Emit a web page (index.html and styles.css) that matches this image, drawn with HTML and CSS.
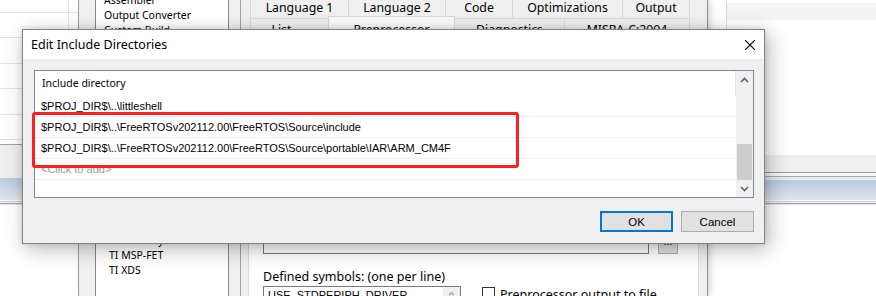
FILE: index.html
```html
<!DOCTYPE html>
<html lang="en">
<head>
    <meta charset="UTF-8">
    <meta name="viewport" content="width=device-width, initial-scale=1.0">
    <title>Edit Include Directories</title>
    <link rel="stylesheet" href="styles.css">
</head>
<body>
    <div class="desktop">
        <!-- IDE behind the options window -->
        <div class="host">
            <div class="host-left">
                <div class="sheet"></div>
                <div class="strip-grey"></div>
                <div class="strip-blue"></div>
                <div class="strip-edge"></div>
            </div>
            <div class="host-right">
                <div class="editor">
                    <div class="editor-bar"></div>
                </div>
                <div class="strip-grey short"></div>
                <div class="strip-rule"></div>
                <div class="strip-blue short"></div>
                <div class="strip-edge"></div>
            </div>
        </div>

        <!-- Options window -->
        <div class="options">
            <ul class="category-list">
                <li>Assembler</li>
                <li>Output Converter</li>
                <li>Custom Build</li>
                <li>Build Actions</li>
                <li>Linker</li>
                <li>Debugger</li>
                <li class="sub">Simulator</li>
                <li class="sub">CADI</li>
                <li class="sub">CMSIS DAP</li>
                <li class="sub">GDB Server</li>
                <li class="sub">I-jet</li>
                <li class="sub">J-Link/J-Trace</li>
                <li class="sub">TI Stellaris</li>
                <li class="sub">Nu-Link</li>
                <li class="sub">PE micro</li>
                <li class="sub">ST-LINK</li>
                <li class="sub">Third-Party Driver</li>
                <li class="sub">TI MSP-FET</li>
                <li class="sub">TI XDS</li>
            </ul>
            <div class="splitter"></div>
            <div class="tab-control">
                <div class="tab-row upper">
                    <div class="tab w-lang1">Language 1</div>
                    <div class="tab w-lang2">Language 2</div>
                    <div class="tab w-code">Code</div>
                    <div class="tab w-opt">Optimizations</div>
                    <div class="tab w-out">Output</div>
                </div>
                <div class="tab-row lower">
                    <div class="tab w-list">List</div>
                    <div class="tab w-pre selected">Preprocessor</div>
                    <div class="tab w-diag">Diagnostics</div>
                    <div class="tab w-misra">MISRA-C:2004</div>
                </div>
                <div class="tab-panel">
                    <div class="file-row">
                        <div class="textbox"></div>
                        <div class="browse">...</div>
                    </div>
                    <div class="field-label">Defined symbols: (one per line)</div>
                    <div class="symbols-row">
                        <div class="symbols-box">
                            <div class="symbols-text">USE_STDPERIPH_DRIVER</div>
                            <div class="mini-scroll">
                                <svg width="17" height="14" viewBox="0 0 17 14"><path d="M6 8 L8.5 5.5 L11 8" fill="none" stroke="#a0a0a0" stroke-width="1.2"/></svg>
                            </div>
                        </div>
                        <div class="check"><span class="check-box"></span>Preprocessor output to file</div>
                    </div>
                </div>
            </div>
        </div>

        <!-- Edit Include Directories dialog -->
        <div class="dialog">
            <div class="dialog-title">
                <span>Edit Include Directories</span>
                <svg class="close" width="10" height="10" viewBox="0 0 10 10">
                    <path d="M0 0 L10 10 M10 0 L0 10" stroke="#000" stroke-width="1.1"/>
                </svg>
            </div>
            <div class="dialog-body">
                <div class="dir-list">
                    <div class="dir-rows">
                        <div class="dir-header">Include directory</div>
                        <div class="dir-row">$PROJ_DIR$\..\littleshell</div>
                        <div class="dir-row">$PROJ_DIR$\..\FreeRTOSv202112.00\FreeRTOS\Source\include</div>
                        <div class="dir-row">$PROJ_DIR$\..\FreeRTOSv202112.00\FreeRTOS\Source\portable\IAR\ARM_CM4F</div>
                        <div class="dir-row add">&lt;Click to add&gt;</div>
                        <div class="dir-row last"></div>
                    </div>
                    <div class="scrollbar">
                        <svg width="17" height="17" viewBox="0 0 17 17"><path d="M5 11 L8.5 7.5 L12 11" fill="none" stroke="#606060" stroke-width="1.6"/></svg>
                        <div class="track"><div class="thumb"></div></div>
                        <svg width="17" height="17" viewBox="0 0 17 17"><path d="M5 7 L8.5 10.5 L12 7" fill="none" stroke="#606060" stroke-width="1.6"/></svg>
                    </div>
                    <div class="highlight"></div>
                </div>
                <div class="dialog-buttons">
                    <button class="btn default">OK</button>
                    <button class="btn">Cancel</button>
                </div>
            </div>
        </div>
    </div>
</body>
</html>
```

FILE: styles.css
```css
body {
    margin: 0;
    background: #fff;
    font-family: "Noto Sans", "Liberation Sans", sans-serif;
    color: #000;
}

.desktop {
    position: relative;
    width: 876px;
    height: 296px;
    overflow: hidden;
}

/* Host IDE */
.host {
    display: flex;
    justify-content: space-between;
    height: 296px;
}

.host-left {
    width: 78px;
    display: flex;
    flex-direction: column;
}

.sheet {
    height: 145px;
    box-sizing: border-box;
    border-bottom: 1px solid #a0a0a0;
    background:
        linear-gradient(to right, transparent 68px, #e3e3e3 68px, #e3e3e3 69px, transparent 69px),
        repeating-linear-gradient(to bottom, transparent 0, transparent 12px, #e3e3e3 12px, #e3e3e3 13px, transparent 13px, transparent 25.4px);
}

.strip-grey {
    height: 33px;
    background: #f0f0f0;
}

.strip-grey.short {
    height: 17px;
}

.strip-blue {
    height: 22px;
    background: linear-gradient(#bccadb, #dde6f0);
}

.strip-blue.short {
    height: 20px;
}

.strip-edge {
    height: 5px;
    background: linear-gradient(#f6f8fa 0, #f6f8fa 1px, #cfcfcf 1px, #cfcfcf 2px, #f0f0f0 2px, #f0f0f0 3px, #a6a6a6 3px, #a6a6a6 4px, #e2e2e2 4px);
}

.strip-rule {
    height: 8px;
    background: linear-gradient(#9a9a9a 0, #9a9a9a 1px, #f7f7f7 1px, #f7f7f7 4px, #a8a8a8 4px, #a8a8a8 5px, #e6ecf3 5px);
}

.host-right {
    width: 167px;
    display: flex;
    flex-direction: column;
}

.editor {
    height: 155px;
    box-sizing: border-box;
    margin-left: 17px;
    padding-top: 3px;
    border-left: 1px solid #dadada;
}

.editor-bar {
    height: 17px;
    background: #f4f4f4;
}

/* Options window */
.options {
    position: absolute;
    z-index: 1;
    left: 78px;
    top: 0;
    width: 630px;
    height: 296px;
    box-sizing: border-box;
    display: flex;
    align-items: flex-start;
    background: #f0f0f0;
    border-left: 1px solid #9c9c9c;
    border-right: 1px solid #8f8f8f;
    box-shadow: 3px 0 6px rgba(0, 0, 0, 0.15);
}

.category-list {
    list-style: none;
    margin: -10px 0 0 16px;
    padding: 2px 0 0 8px;
    width: 134px;
    height: 330px;
    box-sizing: border-box;
    background: #fff;
    border: 1px solid #828790;
    font-size: 10.5px;
    line-height: 15px;
    white-space: nowrap;
    overflow: hidden;
}

.category-list .sub {
    padding-left: 5px;
}

.splitter {
    width: 1px;
    align-self: stretch;
    margin-left: 11px;
    background: #a0a0a0;
}

.tab-control {
    width: 451px;
    margin-left: 7px;
    align-self: stretch;
    display: flex;
    flex-direction: column;
}

.tab-row {
    display: flex;
    padding-left: 2px;
}

.tab-row.upper {
    margin-top: -3px;
}

.tab-row.lower {
    margin-top: -1px;
}

.tab {
    box-sizing: border-box;
    height: 22px;
    margin-left: -1px;
    border: 1px solid #d9d9d9;
    background: #f0f0f0;
    font-size: 12.3px;
    line-height: 19px;
    text-align: center;
    white-space: nowrap;
}

.tab:first-child {
    margin-left: 0;
}

.tab-row.lower .tab {
    height: 21px;
    padding-top: 1px;
}

.tab-row.lower .tab.selected {
    position: relative;
    z-index: 1;
    height: 23px;
    margin-top: -2px;
    padding-top: 3px;
    background: #fbfbfb;
}

.w-lang1 { width: 99px; }
.w-lang2 { width: 98px; }
.w-code { width: 68px; }
.w-opt { width: 111px; }
.w-out { width: 68px; }
.w-list { width: 79px; padding-right: 16px; }
.w-pre { width: 127px; }
.w-diag { width: 111px; }
.w-misra { width: 126px; }

.tab-panel {
    flex: 1;
    margin-top: -1px;
    padding: 0 14px;
    border: 1px solid #d9d9d9;
    background: #fff;
}

.file-row {
    display: flex;
    margin-top: 194px;
    height: 21px;
}

.textbox {
    width: 386px;
    box-sizing: border-box;
    border: 1px solid #7a7a7a;
    background: #fff;
}

.browse {
    width: 20px;
    margin-left: 9px;
    box-sizing: border-box;
    border: 1px solid #adadad;
    background: #e1e1e1;
    font-family: "Liberation Sans", sans-serif;
    font-size: 11px;
    line-height: 15px;
    text-align: center;
}

.field-label {
    margin-top: 14px;
    font-size: 12.5px;
    line-height: 17px;
}

.symbols-row {
    display: flex;
    align-items: flex-start;
    margin-top: 1px;
}

.symbols-box {
    width: 198px;
    height: 60px;
    box-sizing: border-box;
    display: flex;
    border: 1px solid #7a7a7a;
    font-family: "Liberation Sans", sans-serif;
    font-size: 11px;
}

.symbols-text {
    flex: 1;
    padding: 2px 0 0 4px;
}

.mini-scroll {
    width: 17px;
    background: #f0f0f0;
}

.check {
    display: flex;
    margin-left: 21px;
    gap: 5px;
    font-size: 12.5px;
    line-height: 17px;
}

.check-box {
    width: 13px;
    height: 13px;
    margin-top: 1px;
    box-sizing: border-box;
    border: 1px solid #333;
    background: #fff;
}

/* Dialog */
.dialog {
    position: absolute;
    z-index: 2;
    left: 22px;
    top: 29px;
    width: 743px;
    height: 215px;
    box-sizing: border-box;
    border: 1px solid #838383;
    background: #f0f0f0;
    box-shadow: 4px 5px 20px rgba(0, 0, 0, 0.28), 0 0 6px rgba(0, 0, 0, 0.12);
}

.dialog-title {
    display: flex;
    justify-content: space-between;
    align-items: center;
    height: 29px;
    padding: 0 9px 0 8px;
    background: #fff;
    font-size: 12.5px;
}

.dialog-body {
    padding: 11px 10px 0 11px;
}

.dir-list {
    position: relative;
    display: flex;
    height: 128px;
    box-sizing: border-box;
    border: 1px solid #828790;
    background: #fff;
}

.dir-rows {
    flex: 1;
    min-width: 0;
}

.dir-header {
    height: 25px;
    box-sizing: border-box;
    padding-left: 7px;
    border-right: 1px solid #e5e5e5;
    font-size: 10.5px;
    line-height: 24px;
}

.dir-row {
    height: 21px;
    box-sizing: border-box;
    padding-left: 6px;
    border-bottom: 1px solid #f0f0f0;
    font-family: "Liberation Sans", sans-serif;
    font-size: 11px;
    line-height: 20px;
    white-space: nowrap;
}

.dir-row.add {
    color: #9a9a9a;
}

.dir-row.last {
    border-bottom: none;
}

.scrollbar {
    width: 17px;
    display: flex;
    flex-direction: column;
    background: #f0f0f0;
}

.scrollbar svg {
    display: block;
}

.track {
    flex: 1;
    display: flex;
    flex-direction: column;
    justify-content: flex-end;
}

.thumb {
    height: 36px;
    margin: 0 1px;
    background: #cdcdcd;
}

/* red annotation box */
.highlight {
    position: absolute;
    left: -3px;
    top: 41px;
    width: 487px;
    height: 56px;
    box-sizing: border-box;
    border: 3px solid #fe2020;
    border-radius: 3px;
}

.dialog-buttons {
    display: flex;
    justify-content: flex-end;
    gap: 8px;
    margin-top: 13px;
}

.btn {
    width: 73px;
    height: 21px;
    padding: 0;
    box-sizing: border-box;
    border: 1px solid #adadad;
    background: #e1e1e1;
    color: #000;
    font-family: "Liberation Sans", sans-serif;
    font-size: 11.5px;
}

.btn.default {
    border: 2px solid #0078d7;
}
```
